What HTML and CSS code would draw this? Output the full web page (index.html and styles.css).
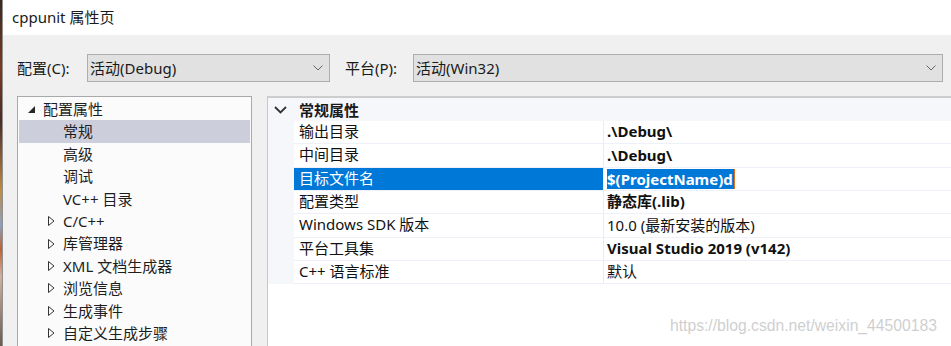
FILE: index.html
```html
<!DOCTYPE html>
<html lang="zh-CN">
<head>
<meta charset="utf-8">
<title>cppunit 属性页</title>
<link rel="stylesheet" href="styles.css">
</head>
<body>
<div class="desk"></div>
<div class="win">
  <div class="titlebar">cppunit 属性页</div>
  <div class="content">
    <div class="toolbar">
      <span class="lbl lbl-cfg">配置(C):</span>
      <div class="select sel-cfg"><span>活动(Debug)</span><svg class="arrow" width="10" height="6" viewBox="0 0 10 6"><path d="M0.5 0.5 L5 5 L9.5 0.5" fill="none" stroke="#666" stroke-width="1"/></svg></div>
      <span class="lbl lbl-plat">平台(P):</span>
      <div class="select sel-plat"><span>活动(Win32)</span><svg class="arrow" width="10" height="6" viewBox="0 0 10 6"><path d="M0.5 0.5 L5 5 L9.5 0.5" fill="none" stroke="#666" stroke-width="1"/></svg></div>
    </div>
    <div class="main">
      <div class="tree">
        <div class="trow root"><span class="exp"></span>配置属性</div>
        <div class="trow child sel">常规</div>
        <div class="trow child">高级</div>
        <div class="trow child">调试</div>
        <div class="trow child">VC++ 目录</div>
        <div class="trow child col"><svg class="tri" width="7" height="10" viewBox="0 0 7 10"><path d="M0.5 0.5 L6 5 L0.5 9.5 Z" fill="none" stroke="#333" stroke-width="1"/></svg>C/C++</div>
        <div class="trow child col"><svg class="tri" width="7" height="10" viewBox="0 0 7 10"><path d="M0.5 0.5 L6 5 L0.5 9.5 Z" fill="none" stroke="#333" stroke-width="1"/></svg>库管理器</div>
        <div class="trow child col"><svg class="tri" width="7" height="10" viewBox="0 0 7 10"><path d="M0.5 0.5 L6 5 L0.5 9.5 Z" fill="none" stroke="#333" stroke-width="1"/></svg>XML 文档生成器</div>
        <div class="trow child col"><svg class="tri" width="7" height="10" viewBox="0 0 7 10"><path d="M0.5 0.5 L6 5 L0.5 9.5 Z" fill="none" stroke="#333" stroke-width="1"/></svg>浏览信息</div>
        <div class="trow child col"><svg class="tri" width="7" height="10" viewBox="0 0 7 10"><path d="M0.5 0.5 L6 5 L0.5 9.5 Z" fill="none" stroke="#333" stroke-width="1"/></svg>生成事件</div>
        <div class="trow child col"><svg class="tri" width="7" height="10" viewBox="0 0 7 10"><path d="M0.5 0.5 L6 5 L0.5 9.5 Z" fill="none" stroke="#333" stroke-width="1"/></svg>自定义生成步骤</div>
      </div>
      <div class="grid">
        <div class="ghead"><svg class="chev" width="13" height="8" viewBox="0 0 13 8"><path d="M1 1 L6.5 6.5 L12 1" fill="none" stroke="#333" stroke-width="1.8"/></svg><span>常规属性</span></div>
        <div class="grow"><div class="gname">输出目录</div><div class="gval b">.\Debug\</div></div>
        <div class="grow"><div class="gname">中间目录</div><div class="gval b">.\Debug\</div></div>
        <div class="grow active"><div class="gname">目标文件名</div><div class="gval b"><span class="hl">$(ProjectName)d</span><span class="caret"></span></div></div>
        <div class="grow"><div class="gname">配置类型</div><div class="gval b">静态库(.lib)</div></div>
        <div class="grow"><div class="gname">Windows SDK 版本</div><div class="gval">10.0 (最新安装的版本)</div></div>
        <div class="grow"><div class="gname">平台工具集</div><div class="gval b">Visual Studio 2019 (v142)</div></div>
        <div class="grow"><div class="gname">C++ 语言标准</div><div class="gval">默认</div></div>
      </div>
    </div>
  </div>
</div>
<div class="watermark">https://blog.csdn.net/weixin_44500183</div>
</body>
</html>
```
FILE: styles.css
```css
html, body {
  margin: 0;
  padding: 0;
}
body {
  width: 951px;
  height: 346px;
  overflow: hidden;
  display: flex;
  position: relative;
  font-family: "Noto Sans", "Noto Sans CJK SC", sans-serif;
  font-size: 15px;
  color: #1a1a1a;
  background: #f0f0f0;
}
.desk {
  width: 2px;
  flex: none;
  background: linear-gradient(to bottom, #3a2a20 0%, #7a3a20 20%, #4a2a28 35%, #c08a40 55%, #8aa0c0 65%, #c06030 72%, #d0b0a0 80%, #6a5a50 100%);
}
.win {
  flex: 1;
  display: flex;
  flex-direction: column;
  border-left: 1px solid #8f8f8f;
  min-width: 0;
}
.titlebar {
  height: 35px;
  line-height: 34px;
  background: #ffffff;
  padding-left: 9px;
  color: #1a1a1a;
  flex: none;
}
.content {
  flex: 1;
  background: #f0f0f0;
  padding: 19px 0 0 14px;
  display: flex;
  flex-direction: column;
  min-height: 0;
}
.toolbar {
  display: flex;
  align-items: center;
  height: 28px;
  flex: none;
}
.lbl {
  flex: none;
  line-height: 28px;
}
.lbl-cfg { width: 70px; }
.lbl-plat { width: 68px; margin-left: 15px; }
.select {
  box-sizing: border-box;
  height: 28px;
  border: 1px solid #adadad;
  background: #e1e1e1;
  display: flex;
  align-items: center;
  justify-content: space-between;
  padding: 0 6px 0 2px;
  flex: none;
}
.select span { line-height: 26px; }
.sel-cfg { width: 243px; }
.sel-plat { width: 530px; }
.arrow { display: block; }
.main {
  flex: 1;
  display: flex;
  gap: 15px;
  margin-top: 14px;
  min-height: 0;
}
.tree {
  box-sizing: border-box;
  width: 235px;
  flex: none;
  border: 1px solid #a9a9a9;
  border-bottom: none;
  background: #fbfbfb;
  padding: 1px 1px 0 1px;
}
.trow {
  height: 22.4px;
  line-height: 22.4px;
  display: flex;
  align-items: center;
  white-space: nowrap;
  color: #1e1e1e;
}
.trow.root { padding-left: 9px; }
.trow.child { padding-left: 44px; }
.trow.col { padding-left: 29px; }
.trow.sel { background: #cccedb; }
.exp {
  width: 0;
  height: 0;
  border-left: 7px solid transparent;
  border-bottom: 7px solid #262626;
  margin-right: 8px;
  margin-top: 1px;
}
.tri {
  display: block;
  margin-right: 8px;
  flex: none;
}
.grid {
  flex: 1;
  border-top: 2px solid #cdcdcd;
  border-left: 1px solid #c8c8c8;
  background: #ffffff;
  min-width: 0;
}
.ghead {
  height: 23px;
  display: flex;
  align-items: center;
  background: #f5f7fb;
  font-weight: bold;
  color: #1a1a1a;
}
.chev {
  display: block;
  margin-left: 6px;
  margin-right: 12px;
}
.grow {
  box-sizing: border-box;
  height: 23.33px;
  display: flex;
  background: #f5f7fb;
  padding-left: 26px;
}
.gname, .gval {
  box-sizing: border-box;
  background: #ffffff;
  border-bottom: 1.5px solid #eef1f7;
  line-height: 21.8px;
  white-space: nowrap;
  color: #111;
}
.gname {
  width: 310px;
  flex: none;
  padding-left: 5px;
  border-right: 1px solid #e9edf3;
}
.gval {
  flex: 1;
  padding-left: 3px;
  display: flex;
  align-items: center;
}
.gval.b { font-weight: bold; }
.active .gname {
  background: #0078d7;
  color: #ffffff;
}
.hl {
  background: #0078d7;
  color: #ffffff;
  line-height: 20px;
  padding-right: 1px;
}
.caret {
  display: inline-block;
  width: 1px;
  height: 20px;
  background: #e07020;
}
.watermark {
  position: absolute;
  left: 670px;
  top: 317px;
  font-family: "Liberation Sans", Arial, sans-serif;
  font-size: 15.7px;
  color: rgba(190, 190, 190, 0.75);
  white-space: nowrap;
}
```
